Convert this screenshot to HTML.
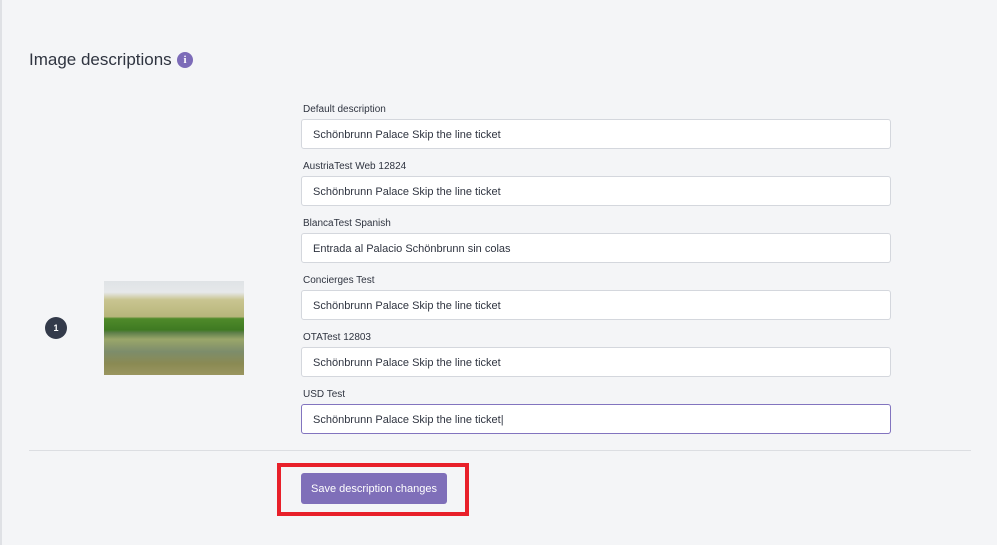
<!DOCTYPE html>
<html><head><meta charset="utf-8"><style>
body{margin:0;width:997px;height:545px;background:#f4f5f7;font-family:"Liberation Sans",sans-serif;position:relative;overflow:hidden}
.lb{position:absolute;left:0;top:0;width:2px;height:545px;background:#dfe1e5}
h2{position:absolute;left:29px;top:50px;margin:0;font-weight:normal;font-size:17px;color:#2f3440}
.info{position:absolute;left:177px;top:52px;width:16px;height:16px;border-radius:50%;background:#7c6bb8;color:#fff;font-size:11px;font-weight:bold;text-align:center;line-height:16px;font-family:"Liberation Serif",serif}
.lab{position:absolute;left:303px;font-size:10px;color:#2f3440}
.in{position:absolute;left:301px;height:28px;border:1px solid #d4d7dd;border-radius:3px;background:#fff;font-size:11px;color:#2f3440;line-height:30px;padding-left:11px;box-sizing:content-box;width:577px}
.num{position:absolute;left:45px;top:317px;width:22px;height:22px;border-radius:50%;background:#333a4a;color:#fff;font-size:9px;text-align:center;line-height:22px;font-weight:bold}
.img{position:absolute;left:104px;top:281px;width:140px;height:94px;background:linear-gradient(#dfe3e6 0%,#e6e8ea 12%,#c9c591 20%,#b7b57a 38%,#4f8a2a 40%,#3f7a22 52%,#5f7f4a 55%,#9aa66a 62%,#7d8d6b 75%,#8a8a53 88%,#9a9560 100%)}
hr{position:absolute;left:29px;top:450px;width:942px;margin:0;border:0;border-top:1px solid #dcdee2}
.red{position:absolute;left:277px;top:463px;width:184px;height:45px;border:4px solid #e8202a}
.btn{position:absolute;left:301px;top:473px;width:146px;height:31px;background:#7f6fb9;border-radius:3px;color:#fff;font-size:11px;text-align:center;line-height:33px}
</style></head><body>
<div class="lb"></div>
<h2>Image descriptions</h2><div class="info">i</div>
<div class="lab" style="top:104px">Default description</div>
<div class="in" style="top:119px">Schönbrunn Palace Skip the line ticket</div>
<div class="lab" style="top:161px">AustriaTest Web 12824</div>
<div class="in" style="top:176px">Schönbrunn Palace Skip the line ticket</div>
<div class="lab" style="top:218px">BlancaTest Spanish</div>
<div class="in" style="top:233px">Entrada al Palacio Schönbrunn sin colas</div>
<div class="lab" style="top:275px">Concierges Test</div>
<div class="in" style="top:290px">Schönbrunn Palace Skip the line ticket</div>
<div class="lab" style="top:332px">OTATest 12803</div>
<div class="in" style="top:347px">Schönbrunn Palace Skip the line ticket</div>
<div class="lab" style="top:389px">USD Test</div>
<div class="in" style="top:404px;border-color:#8274bf">Schönbrunn Palace Skip the line ticket|</div>
<div class="num">1</div>
<div class="img"></div>
<hr>
<div class="red"></div>
<div class="btn">Save description changes</div>
</body></html>
